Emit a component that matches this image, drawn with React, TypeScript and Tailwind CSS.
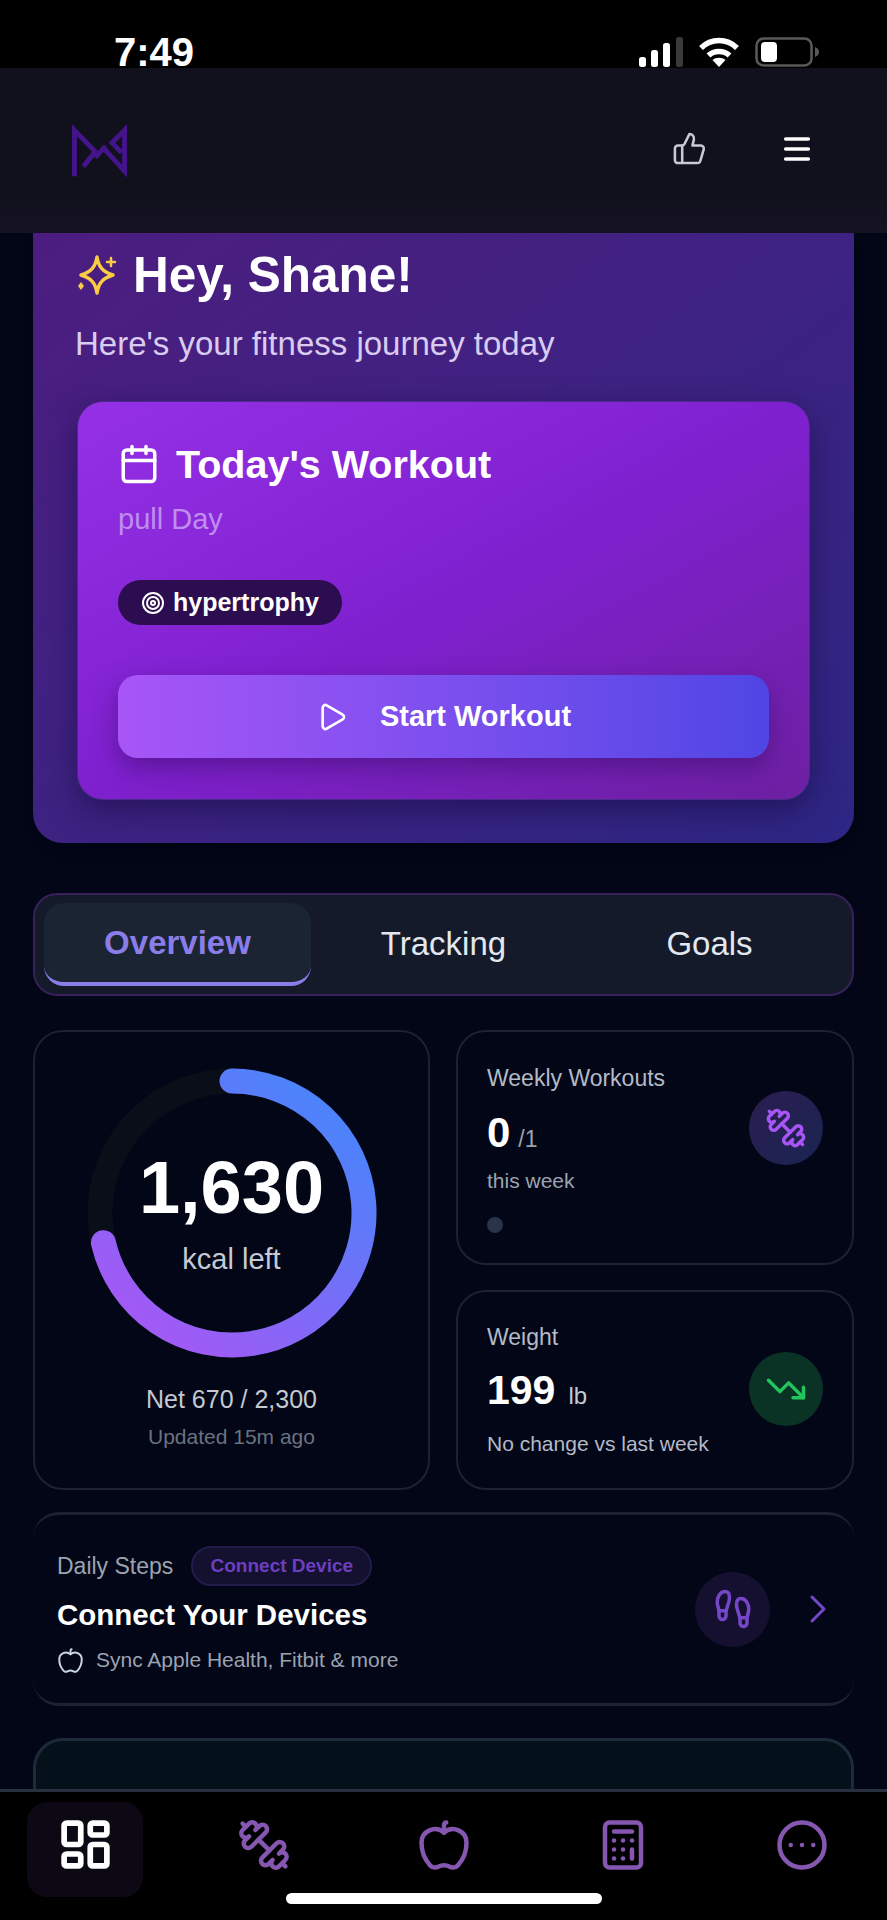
import {
  Apple,
  Calculator,
  Calendar,
  ChevronRight,
  CircleEllipsis,
  Dumbbell,
  Footprints,
  LayoutDashboard,
  Menu,
  Play,
  Target,
  ThumbsUp,
  TrendingDown,
} from "lucide-react";

function StatusBar() {
  return (
    <div className="flex h-[68px] shrink-0 items-end justify-between bg-black pl-[114px] pr-[67px]">
      <span className="text-[40px] font-bold leading-[32px] text-white">7:49</span>
      <div className="flex items-end gap-[16px] pb-px">
        <svg width="44" height="30" viewBox="0 0 44 30">
          <rect x="0" y="20" width="7" height="10" rx="2.5" fill="#fff" />
          <rect x="12" y="13" width="7" height="17" rx="2.5" fill="#fff" />
          <rect x="24" y="6" width="7" height="24" rx="2.5" fill="#fff" />
          <rect x="37" y="0" width="7" height="30" rx="2.5" fill="#3a3a3a" />
        </svg>
        <svg width="40" height="30" viewBox="0 0 40 30" fill="none">
          <path d="M2 11C12 1 28 1 38 11" stroke="#fff" strokeWidth="5.5" />
          <path d="M9.5 18.5C15 13 25 13 30.5 18.5" stroke="#fff" strokeWidth="5.5" />
          <path d="M20 30L13.5 23C17 20 23 20 26.5 23Z" fill="#fff" />
        </svg>
        <svg width="65" height="30" viewBox="0 0 65 30" fill="none">
          <rect x="1.5" y="1.5" width="55" height="27" rx="7" stroke="#5a5a5a" strokeWidth="2.5" />
          <rect x="6" y="5" width="16" height="20" rx="4" fill="#fff" />
          <path d="M60 10C63 11 64 13 64 15C64 17 63 19 60 20Z" fill="#5a5a5a" />
        </svg>
      </div>
    </div>
  );
}

function Header() {
  return (
    <div className="flex h-[165px] shrink-0 items-start justify-between bg-gradient-to-b from-[#10111c] from-70% to-[#161222] pl-[71px] pr-[73px] pt-[55px]">
      <svg width="57" height="54" viewBox="92 100 172 164" fill="none" stroke="#43148a" strokeWidth="15">
        <path d="M102 262V122L165 187L129 232" />
        <path d="M165 205L197 170" />
        <path d="M186 171L254 246V122L216 160L245 190" />
      </svg>
      <div className="flex items-center gap-[73px] pt-[8px]">
        <ThumbsUp size={35} strokeWidth={1.75} className="text-[#c4cad6]" />
        <Menu size={34} strokeWidth={2.5} className="text-white" />
      </div>
    </div>
  );
}

function Hero() {
  return (
    <section className="rounded-b-[30px] bg-gradient-to-br from-[#4c1d80] to-[#2d2684] px-[42px] pb-[43px] pt-[14px] shadow-lg">
      <div className="flex items-center gap-[16px]">
        <svg width="42" height="40" viewBox="0 0 42 40" fill="none" className="shrink-0">
          <path
            d="M22 2C23.5 12 28 17 38 20C28 23 23.5 28 22 38C20.5 28 16 23 6 20C16 17 20.5 12 22 2Z"
            stroke="#facc43"
            strokeWidth="3.5"
            strokeLinejoin="round"
          />
          <path d="M36 3V11M32 7H40" stroke="#facc43" strokeWidth="2.5" strokeLinecap="round" />
          <path d="M6 27L9 31L6 35L3 31Z" fill="#facc43" />
        </svg>
        <h1 className="text-[49.5px] font-bold leading-[56px] text-white">Hey, Shane!</h1>
      </div>
      <p className="mt-[21px] text-[33px] leading-[40px] text-[#d9ccf0]">Here's your fitness journey today</p>

      <div className="mx-[2px] mt-[37px] rounded-[26px] border border-[#4a2a8a] bg-gradient-to-br from-[#9530e6] via-[#7f20cf] to-[#6d20a2] px-[40px] pb-[41px] pt-[38px] shadow-[0_10px_30px_rgba(20,10,60,0.55)]">
        <div className="flex items-center gap-[16px]">
          <Calendar size={42} strokeWidth={2} className="text-white" />
          <h2 className="text-[39.5px] font-bold leading-[48px] text-white">Today's Workout</h2>
        </div>
        <p className="mt-[14px] text-[29px] leading-[34px] text-[#c08eee]">pull Day</p>
        <div className="mt-[44px] flex h-[45px] w-[224px] items-center gap-[8px] rounded-full bg-[#2c0d4f] pl-[23px]">
          <Target size={24} strokeWidth={2} className="text-white" />
          <span className="text-[25px] font-bold text-white">hypertrophy</span>
        </div>
        <button className="mt-[50px] flex h-[83px] w-full items-center justify-center gap-[32px] rounded-[20px] bg-gradient-to-r from-[#a855f7] to-[#4f46e5] text-[29px] font-bold text-white shadow-[0_10px_24px_rgba(60,15,110,0.55)]">
          <Play size={32} strokeWidth={2} />
          Start Workout
        </button>
      </div>
    </section>
  );
}

function Tabs() {
  return (
    <div className="mt-[50px] flex h-[103px] items-center rounded-[24px] border-2 border-[#38205a] bg-[#141a2a] px-[9px] text-[33px]">
      <div className="flex h-[83px] w-[267px] items-center justify-center rounded-[20px] border-b-[4px] border-[#8b7de8] bg-[#1a2432] font-bold text-[#8b7de8]">
        Overview
      </div>
      <div className="flex flex-1 justify-center pb-[2px] text-[#e2e8f0]">Tracking</div>
      <div className="flex w-[267px] justify-center pb-[2px] text-[#e2e8f0]">Goals</div>
    </div>
  );
}

function CalorieCard() {
  return (
    <div className="relative h-[460px] w-[397px] rounded-[30px] border-2 border-[#1c2230] pt-[36px]">
      <div className="relative mx-auto h-[290px] w-[290px]">
        <svg width="290" height="290" viewBox="0 0 290 290" fill="none">
          <defs>
            <linearGradient id="ring" gradientUnits="userSpaceOnUse" x1="240" y1="40" x2="60" y2="250">
              <stop offset="0" stopColor="#4c83fb" />
              <stop offset="1" stopColor="#a05af5" />
            </linearGradient>
          </defs>
          <circle cx="145" cy="145" r="132" stroke="#0a0e18" strokeWidth="25" />
          <path d="M145 13A132 132 0 1 1 16.4 174.7" stroke="url(#ring)" strokeWidth="25" strokeLinecap="round" />
        </svg>
        <div className="absolute inset-0 flex flex-col items-center pt-[80px]">
          <span className="text-[74px] font-bold leading-[80px] text-white">1,630</span>
          <span className="mt-[14px] text-[29px] leading-[34px] text-[#c4cad6]">kcal left</span>
        </div>
      </div>
      <p className="mt-[25px] text-center text-[25px] leading-[32px] text-[#c4c8d0]">Net 670 / 2,300</p>
      <p className="mt-[9px] text-center text-[21px] leading-[26px] text-[#6b7280]">Updated 15m ago</p>
    </div>
  );
}

function WorkoutsCard() {
  return (
    <div className="flex h-[235px] items-start justify-between rounded-[30px] border-2 border-[#1c2230] pl-[29px] pr-[29px] pt-[31px]">
      <div>
        <p className="text-[23px] leading-[30px] text-[#b4bac6]">Weekly Workouts</p>
        <p className="mt-[17px] flex items-baseline gap-[8px] leading-[46px]">
          <span className="text-[42px] font-bold text-white">0</span>
          <span className="text-[23px] text-[#9ca3af]">/1</span>
        </p>
        <p className="mt-[5px] text-[21px] leading-[28px] text-[#9ca3af]">this week</p>
        <div className="mt-[22px] h-[16px] w-[16px] rounded-full bg-[#2a3347]" />
      </div>
      <div className="mt-[28px] flex h-[74px] w-[74px] items-center justify-center rounded-full bg-gradient-to-br from-[#2a1d50] to-[#192552]">
        <Dumbbell size={42} strokeWidth={2} className="-scale-x-100 text-[#a855f7]" />
      </div>
    </div>
  );
}

function WeightCard() {
  return (
    <div className="flex h-[200px] items-start justify-between rounded-[30px] border-2 border-[#1c2230] pl-[29px] pr-[29px] pt-[30px]">
      <div>
        <p className="text-[23px] leading-[30px] text-[#b4bac6]">Weight</p>
        <p className="mt-[14px] flex items-baseline gap-[13px] leading-[48px]">
          <span className="text-[41px] font-bold text-white">199</span>
          <span className="text-[24px] text-[#c4cad6]">lb</span>
        </p>
        <p className="mt-[10px] text-[21px] leading-[28px] text-[#b4bac6]">No change vs last week</p>
      </div>
      <div className="mt-[30px] flex h-[74px] w-[74px] items-center justify-center rounded-full bg-[#0a3325]">
        <TrendingDown size={42} strokeWidth={2} className="text-[#22c55e]" />
      </div>
    </div>
  );
}

function StepsCard() {
  return (
    <div className="mt-[22px] flex h-[194px] items-center justify-between rounded-[26px] border-y-[3px] border-[#1c2230] pl-[24px] pr-[12px]">
      <div className="pt-[2px]">
        <div className="flex items-center gap-[18px]">
          <span className="text-[23px] text-[#9ca3af]">Daily Steps</span>
          <span className="flex h-[40px] w-[181px] items-center justify-center rounded-full border-2 border-[#231c4a] bg-[#14102f] text-[19px] font-bold text-[#6d3fc0]">
            Connect Device
          </span>
        </div>
        <p className="mt-[9px] text-[29.5px] font-bold leading-[40px] text-white">Connect Your Devices</p>
        <div className="mt-[11px] flex items-center gap-[12px] text-[21px] leading-[28px] text-[#9ca3af]">
          <Apple size={27} strokeWidth={1.75} className="text-[#cbd5e1]" />
          Sync Apple Health, Fitbit &amp; more
        </div>
      </div>
      <div className="flex items-center gap-[24px]">
        <div className="flex h-[75px] w-[75px] items-center justify-center rounded-full bg-[#15102f]">
          <Footprints size={42} strokeWidth={2} className="text-[#7446c8]" />
        </div>
        <ChevronRight size={48} strokeWidth={1.5} className="text-[#7446c8]" />
      </div>
    </div>
  );
}

function BottomNav() {
  return (
    <nav className="relative flex h-[131px] shrink-0 items-start justify-between border-t-[3px] border-[#28303f] bg-black px-[27px] pt-[10px]">
      <div className="flex h-[95px] w-[116px] items-start justify-center rounded-[20px] bg-[#0d0914] pt-[14px]">
        <LayoutDashboard size={57} strokeWidth={2.4} className="text-white" />
      </div>
      <div className="flex w-[116px] justify-center pt-[16px]">
        <Dumbbell size={54} strokeWidth={2} className="-scale-x-100 text-[#8557b0]" />
      </div>
      <div className="flex w-[116px] justify-center pt-[16px]">
        <Apple size={54} strokeWidth={2} className="text-[#8557b0]" />
      </div>
      <div className="flex w-[116px] justify-center pt-[16px]">
        <Calculator size={54} strokeWidth={2} className="text-[#8557b0]" />
      </div>
      <div className="flex w-[116px] justify-center pt-[16px]">
        <CircleEllipsis size={54} strokeWidth={2} className="text-[#8557b0]" />
      </div>
      <div className="absolute left-[286px] top-[101px] h-[11px] w-[316px] rounded-full bg-white" />
    </nav>
  );
}

export default function App() {
  return (
    <div className="flex h-[1920px] w-[887px] flex-col overflow-hidden bg-[#020617] font-['Liberation_Sans',Arial,sans-serif]">
      <StatusBar />
      <Header />
      <main className="min-h-0 flex-1 overflow-hidden px-[33px]">
        <Hero />
        <Tabs />
        <div className="mt-[34px] flex gap-[26px]">
          <CalorieCard />
          <div className="flex flex-1 flex-col gap-[25px]">
            <WorkoutsCard />
            <WeightCard />
          </div>
        </div>
        <StepsCard />
        <div className="mt-[32px] h-[120px] rounded-t-[30px] border-[3px] border-[#1d2a3a] bg-[#04101a]" />
      </main>
      <BottomNav />
    </div>
  );
}
